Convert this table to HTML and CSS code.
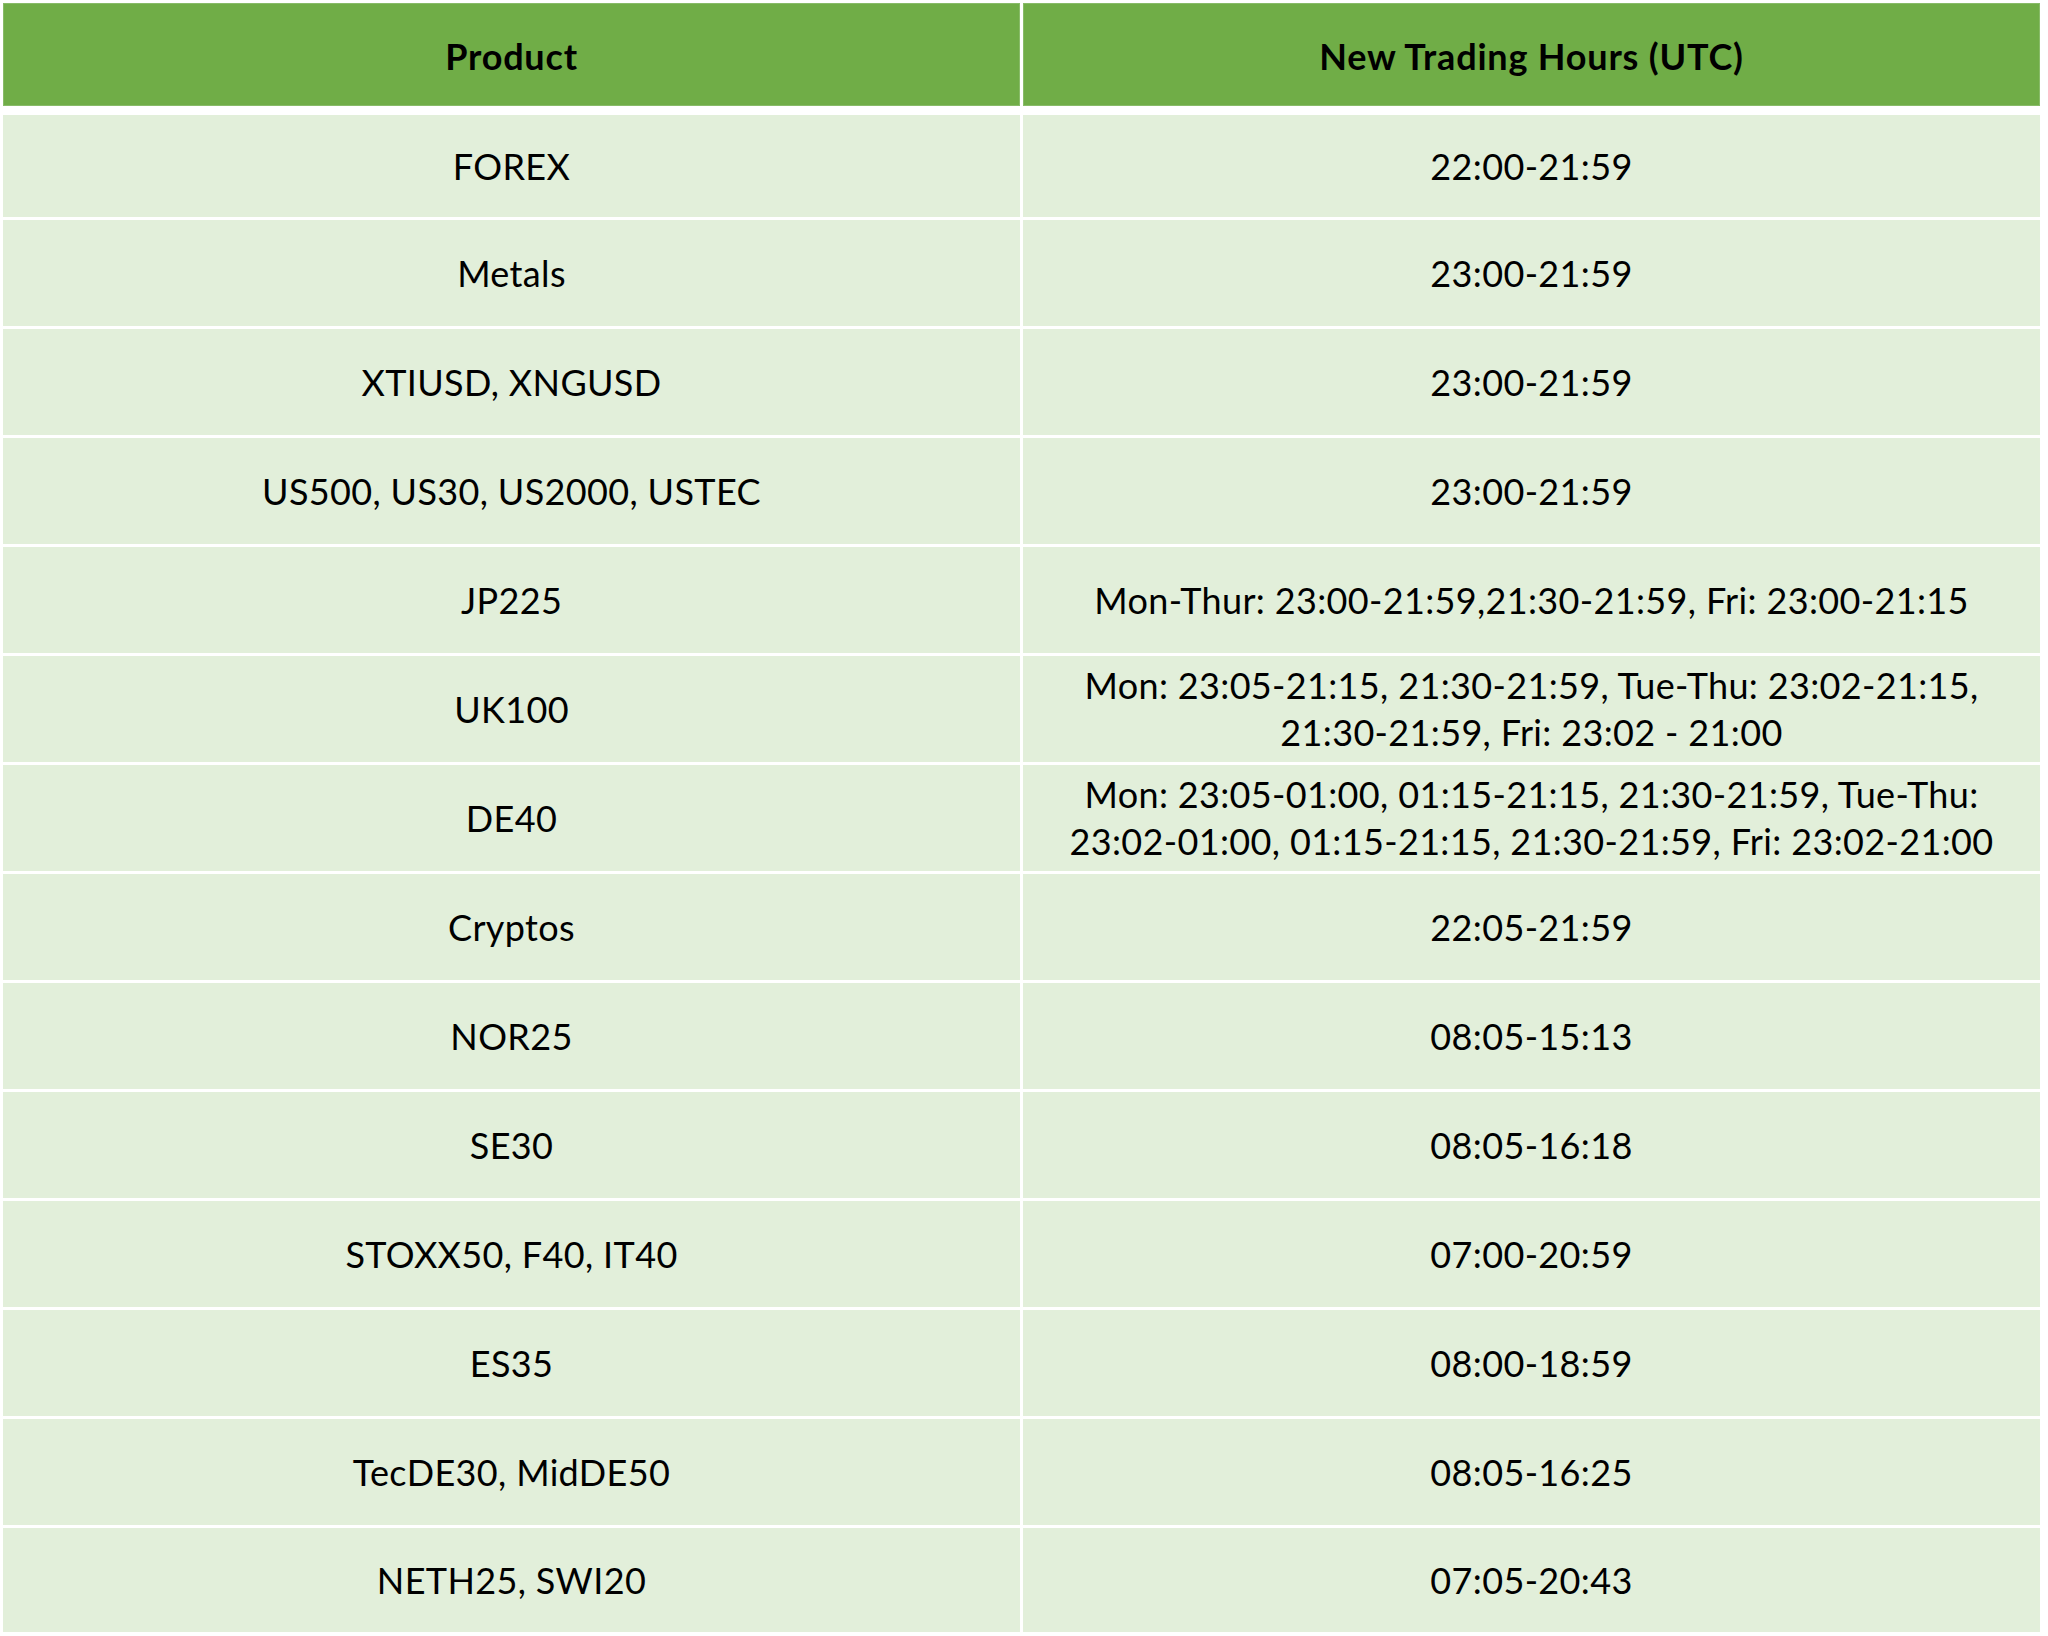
FILE: index.html
```html
<!DOCTYPE html>
<html lang="en">
<head>
<meta charset="utf-8">
<title>New Trading Hours</title>
<link rel="stylesheet" href="styles.css">
</head>
<body>
<div class="table">
  <div class="row head">
    <div class="cell">Product</div>
    <div class="cell">New Trading Hours (UTC)</div>
  </div>
  <div class="row first">
    <div class="cell">FOREX</div>
    <div class="cell">22:00-21:59</div>
  </div>
  <div class="row">
    <div class="cell">Metals</div>
    <div class="cell">23:00-21:59</div>
  </div>
  <div class="row">
    <div class="cell">XTIUSD, XNGUSD</div>
    <div class="cell">23:00-21:59</div>
  </div>
  <div class="row">
    <div class="cell">US500, US30, US2000, USTEC</div>
    <div class="cell">23:00-21:59</div>
  </div>
  <div class="row">
    <div class="cell">JP225</div>
    <div class="cell"><span class="nw">Mon-Thur: 23:00-21:59,21:30-21:59, Fri: 23:00-21:15</span></div>
  </div>
  <div class="row">
    <div class="cell">UK100</div>
    <div class="cell"><p class="text"><span class="nw">Mon: 23:05-21:15,</span> <span class="nw">21:30-21:59,</span> <span class="nw">Tue-Thu: 23:02-21:15,</span> <span class="nw">21:30-21:59,</span> <span class="nw">Fri: 23:02 - 21:00</span></p></div>
  </div>
  <div class="row">
    <div class="cell">DE40</div>
    <div class="cell"><p class="text"><span class="nw">Mon: 23:05-01:00,</span> <span class="nw">01:15-21:15,</span> <span class="nw">21:30-21:59,</span> <span class="nw">Tue-Thu:</span> <span class="nw">23:02-01:00,</span> <span class="nw">01:15-21:15,</span> <span class="nw">21:30-21:59,</span> <span class="nw">Fri: 23:02-21:00</span></p></div>
  </div>
  <div class="row">
    <div class="cell">Cryptos</div>
    <div class="cell">22:05-21:59</div>
  </div>
  <div class="row">
    <div class="cell">NOR25</div>
    <div class="cell">08:05-15:13</div>
  </div>
  <div class="row">
    <div class="cell">SE30</div>
    <div class="cell">08:05-16:18</div>
  </div>
  <div class="row">
    <div class="cell">STOXX50, F40, IT40</div>
    <div class="cell">07:00-20:59</div>
  </div>
  <div class="row">
    <div class="cell">ES35</div>
    <div class="cell">08:00-18:59</div>
  </div>
  <div class="row">
    <div class="cell">TecDE30, MidDE50</div>
    <div class="cell">08:05-16:25</div>
  </div>
  <div class="row last">
    <div class="cell">NETH25, SWI20</div>
    <div class="cell">07:05-20:43</div>
  </div>
</div>
</body>
</html>
```
FILE: styles.css
```css
html, body {
  margin: 0;
  padding: 0;
  background: #ffffff;
}

.table {
  display: flex;
  flex-direction: column;
  gap: 3px;
  padding: 3px 8px 0 3px;
  font-family: Lato, "Noto Sans", sans-serif;
  font-size: 36px;
  letter-spacing: 0.35px;
  color: #000000;
}

.row {
  display: grid;
  grid-template-columns: 1017px 1017px;
  column-gap: 3px;
  height: 106px;
}

.cell {
  display: flex;
  align-items: center;
  justify-content: center;
  text-align: center;
  background: #e2efda;
  line-height: 47px;
  padding: 0 30px;
}

.text {
  margin: 0;
}

.nw {
  white-space: nowrap;
}

.head {
  height: 103px;
  margin-bottom: 6px;
}

.head .cell {
  background: #70ad47;
  font-weight: bold;
  letter-spacing: 0.8px;
  padding-top: 4px;
  box-shadow: inset 0 0 0 1px #88bb68;
}

.first {
  height: 102px;
}

.last {
  height: 104px;
}
```
